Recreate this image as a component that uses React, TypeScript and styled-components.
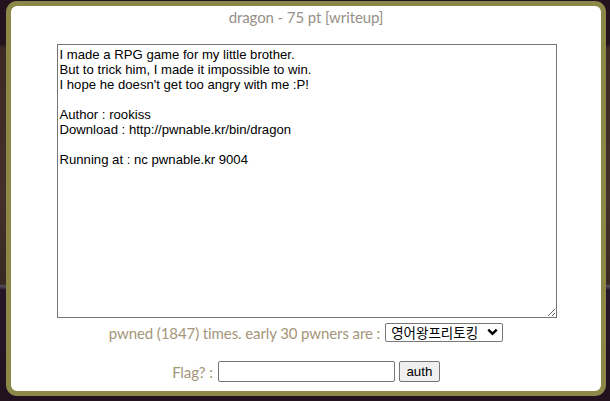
import React from "react";
import styled, { createGlobalStyle } from "styled-components";

const Global = createGlobalStyle`
  html, body {
    margin: 0;
    padding: 0;
    width: 610px;
    height: 401px;
    overflow: hidden;
  }
  body {
    background: linear-gradient(
      to bottom,
      #24121f 0px,
      #24121f 44px,
      #3e2925 48px,
      #43302a 200px,
      #3a2823 284px,
      #55525a 286px,
      #25152a 290px,
      #22121f 401px
    );
  }
`;

const Backdrop = styled.div`
  width: 610px;
  height: 401px;
  box-sizing: border-box;
  padding: 1px 4px 5px 6px;
`;

const Modal = styled.div`
  box-sizing: border-box;
  width: 600px;
  height: 395px;
  border: 5px solid #8b8848;
  border-radius: 11px;
  background: #ffffff;
  display: flex;
  flex-direction: column;
  align-items: center;
  font-family: Lato, "Open Sans", sans-serif;
`;

const Title = styled.div`
  margin-top: 1px;
  height: 20px;
  line-height: 20px;
  font-size: 15px;
  color: #959088;
  letter-spacing: -0.1px;
`;

const Description = styled.textarea`
  box-sizing: border-box;
  margin-top: 17px;
  margin-left: 1px;
  width: 500px;
  height: 274px;
  border: 1px solid #767676;
  border-radius: 0;
  padding: 2px;
  font-family: "Liberation Sans", Arial, sans-serif;
  font-size: 13.15px;
  line-height: 15px;
  color: #000;
  background: #fff;
  outline: none;
  resize: both;
`;

const Row = styled.div<{ $top: number }>`
  display: flex;
  align-items: center;
  justify-content: center;
  margin-top: ${(p) => p.$top}px;
  font-size: 15px;
  color: #a4957a;
`;

const Label = styled.span`
  margin-right: 5px;
  letter-spacing: -0.1px;
`;

const SelectWrap = styled.div`
  position: relative;
  display: inline-flex;
`;

const Select = styled.select`
  appearance: none;
  box-sizing: border-box;
  width: 118px;
  height: 19px;
  border: 1px solid #767676;
  border-radius: 2px;
  background: #fff;
  padding: 0 0 0 5px;
  font-family: "Noto Sans CJK KR", sans-serif;
  font-size: 13.5px;
  line-height: 17px;
  color: #000;
  outline: none;
`;

const Chevron = styled.svg`
  position: absolute;
  right: 5px;
  top: 5px;
  pointer-events: none;
`;

const FlagInput = styled.input`
  box-sizing: border-box;
  width: 177px;
  height: 21px;
  border: 1px solid #767676;
  border-radius: 2px;
  padding: 1px 2px;
  background: #fff;
  outline: none;
`;

const AuthButton = styled.button`
  box-sizing: border-box;
  margin-left: 4px;
  width: 41px;
  height: 21px;
  border: 1px solid #767676;
  border-radius: 2px;
  background: #efefef;
  padding: 0;
  font-family: "Liberation Sans", Arial, sans-serif;
  font-size: 13.33px;
  color: #000;
`;

const text = `I made a RPG game for my little brother.
But to trick him, I made it impossible to win.
I hope he doesn't get too angry with me :P!

Author : rookiss
Download : http://pwnable.kr/bin/dragon

Running at : nc pwnable.kr 9004`;

export default function App() {
  return (
    <>
      <Global />
      <Backdrop>
        <Modal>
          <Title>dragon - 75 pt [writeup]</Title>
          <Description defaultValue={text} readOnly />
          <Row $top={5}>
            <Label>pwned (1847) times. early 30 pwners are :</Label>
            <SelectWrap>
              <Select defaultValue="a">
                <option value="a">영어왕프리토킹</option>
              </Select>
              <Chevron width="11" height="8" viewBox="0 0 11 8">
                <path d="M1.3 1.6 L5.5 5.8 L9.7 1.6" fill="none" stroke="#000" strokeWidth="2.4" />
              </Chevron>
            </SelectWrap>
          </Row>
          <Row $top={19}>
            <Label>Flag? :</Label>
            <FlagInput type="text" />
            <AuthButton>auth</AuthButton>
          </Row>
        </Modal>
      </Backdrop>
    </>
  );
}
